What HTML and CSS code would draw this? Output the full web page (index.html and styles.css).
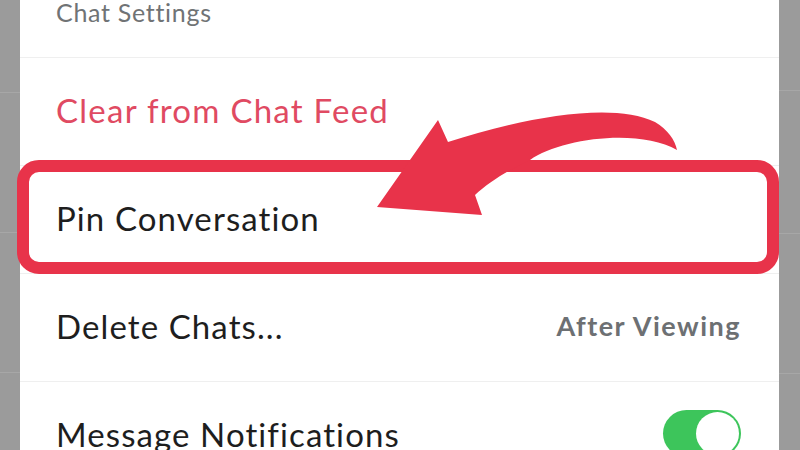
FILE: index.html
```html
<!DOCTYPE html>
<html lang="en">
<head>
<meta charset="utf-8">
<title>Chat Settings</title>
<link rel="stylesheet" href="styles.css">
</head>
<body>
<div class="page">
  <div class="side side-left">
    <div class="ghost-line" style="top:92px"></div>
    <div class="ghost-line" style="top:232px"></div>
    <div class="ghost-line" style="top:372px"></div>
  </div>
  <main class="panel">
    <div class="section-header">Chat Settings</div>
    <div class="row"><span class="label label-danger">Clear from Chat Feed</span></div>
    <div class="row"><span class="label">Pin Conversation</span></div>
    <div class="row"><span class="label">Delete Chats...</span><span class="value">After Viewing</span></div>
    <div class="row"><span class="label">Message Notifications</span><span class="toggle"><span class="knob"></span></span></div>
  </main>
  <div class="side side-right">
    <div class="ghost-line" style="top:90px"></div>
    <div class="ghost-line" style="top:233px"></div>
    <div class="ghost-line" style="top:373px"></div>
  </div>
  <div class="highlight"></div>
  <svg class="arrow" width="800" height="450" viewBox="0 0 800 450" aria-hidden="true">
    <path d="M377,207 L438,120 L448,142 C515,120 610,100 655,122 C668,130 675,140 677,150 C640,128 560,138 530,160 C505,172 488,183 475,195 L482,215 Z" fill="#e8334a"/>
  </svg>
</div>
</body>
</html>
```
FILE: styles.css
```css
html, body {
  margin: 0;
  padding: 0;
  background: #ffffff;
}
.page {
  position: relative;
  width: 800px;
  height: 450px;
  overflow: hidden;
  display: flex;
  font-family: "Lato", "Noto Sans", sans-serif;
}
.side {
  position: relative;
  background: #9b9b9b;
  flex: 0 0 auto;
}
.side-left { width: 20px; }
.side-right { width: 21px; }
.ghost-line {
  position: absolute;
  left: 0;
  right: 0;
  height: 1px;
  background: #a7a7a7;
}
.panel {
  flex: 1 1 auto;
  background: #ffffff;
  display: flex;
  flex-direction: column;
}
.section-header {
  height: 57px;
  flex: 0 0 auto;
  box-sizing: border-box;
  padding-left: 36px;
  font-size: 25px;
  line-height: 25px;
  letter-spacing: 0.7px;
  color: #707375;
}
.row {
  flex: 0 0 auto;
  height: 108px;
  box-sizing: border-box;
  border-top: 1px solid #efefef;
  padding: 0 38px 4px 36px;
  display: flex;
  align-items: center;
  justify-content: space-between;
}
.label {
  font-size: 33px;
  letter-spacing: 1.1px;
  color: #1e1e1e;
  white-space: nowrap;
}
.label-danger {
  color: #e04a62;
  letter-spacing: 1.25px;
}
.value {
  font-size: 27px;
  font-weight: 700;
  letter-spacing: 1.5px;
  color: #6d7073;
}
.toggle {
  width: 78px;
  height: 47px;
  box-sizing: border-box;
  padding: 2px;
  border-radius: 24px;
  background: #3dc55b;
  display: flex;
  justify-content: flex-end;
}
.knob {
  width: 43px;
  height: 43px;
  border-radius: 50%;
  background: #ffffff;
}
.highlight {
  position: absolute;
  left: 17px;
  top: 160px;
  width: 762px;
  height: 114px;
  box-sizing: border-box;
  border: 12px solid #e8334a;
  border-radius: 22px;
}
.arrow {
  position: absolute;
  left: 0;
  top: 0;
  pointer-events: none;
}
```
